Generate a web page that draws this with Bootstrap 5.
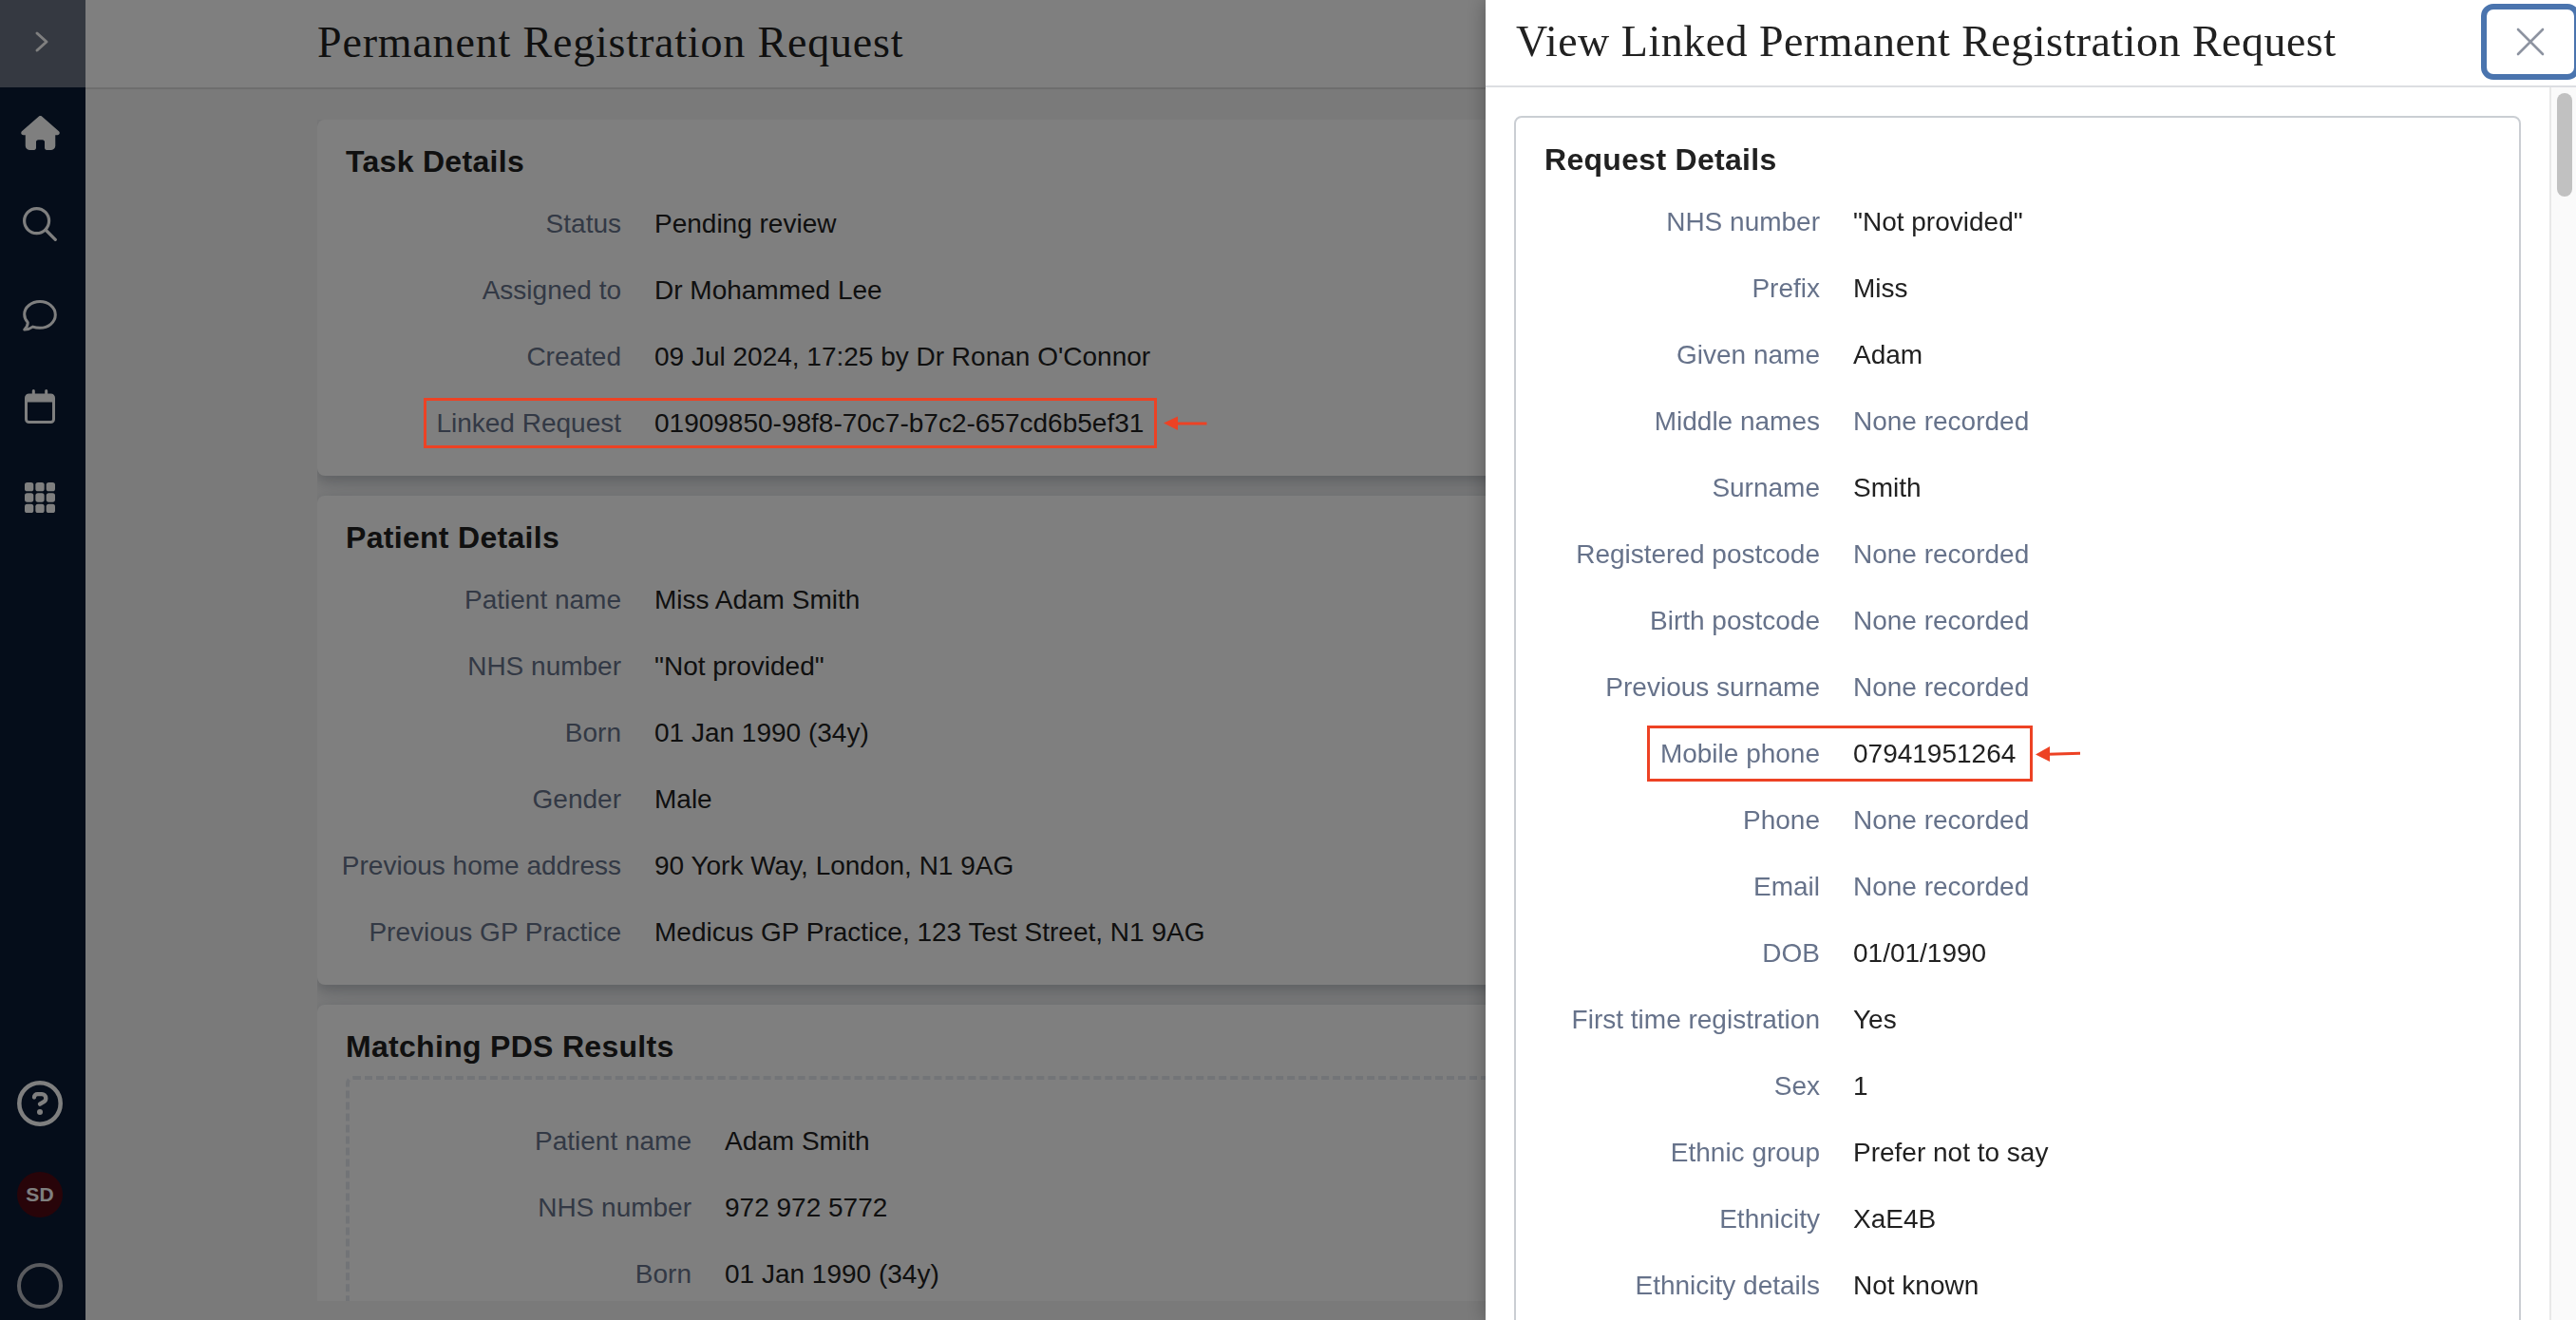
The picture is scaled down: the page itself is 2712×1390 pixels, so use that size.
<!DOCTYPE html>
<html lang="en">
<head>
<meta charset="utf-8">
<meta name="viewport" content="width=device-width, initial-scale=1">
<title>Permanent Registration Request</title>
<link href="https://cdn.jsdelivr.net/npm/bootstrap@5.3.0/dist/css/bootstrap.min.css" rel="stylesheet">
<style>
html,body{height:100%}
body{font-family:"Liberation Sans",Arial,sans-serif;font-size:28px;line-height:32px;color:#212121;background:#f5f5f5;overflow:hidden}
.side-rail{width:90px;background:#0b1b35}
.rail-toggle{height:92px;background:#6a7282;padding-right:3px}
.rail-item{height:96px;padding-right:6px}
.rail-item svg,.rail-toggle svg{display:block}
.rail-bottom{margin-bottom:-12px}
.avatar{width:48px;height:48px;background:#500812;color:#fff;font-weight:700;font-size:21px;letter-spacing:.2px}
.ring{width:48px;height:48px;border:4px solid #b4b7bf}
.page-head{height:94px;padding:0 0 3px 244px;border-bottom:2px solid #dcdcdc;background:#fff}
.page-title{font-family:"Liberation Serif",Georgia,serif;font-size:46px;line-height:52px;letter-spacing:.82px;font-weight:400;color:#212121;white-space:nowrap}
.drawer .page-title{letter-spacing:.49px;padding-bottom:2px}
.content-scroll{margin:32px 244px 20px 244px;overflow:hidden;min-height:0}
.panel{background:#fff;border-radius:8px;padding:28px 0 20px 30px;box-shadow:0 6px 12px rgba(40,50,65,.2),0 2px 30px rgba(90,110,140,.14);margin-bottom:21px;flex:none}
.panel-title{font-size:32px;line-height:32px;letter-spacing:.3px;font-weight:700;margin:0 0 15px}
.field{height:70px;display:flex;align-items:center;position:relative}
.field-label{width:290px;flex:none;display:flex;justify-content:flex-end;color:#66728a;margin-right:35px;white-space:nowrap}
.no-value{color:#66728a}
.matches{border:4px dashed #e4e8ee;border-radius:8px;margin:0 30px 0 0;padding:30px 0 20px 70px}
.drawer{--bs-offcanvas-width:1148px;border:0!important;box-shadow:0 0 20px rgba(0,0,0,.3);color:#212121;background:#fff}
.drawer-head{height:92px;border-bottom:2px solid #dcdee2;padding-left:32px}
.close-btn{width:104px;height:80px;border:6px solid #4a74ae;border-radius:13px;background:#fff;margin:0 -4px 2px 0;padding:0}
.drawer-scroll{overflow:hidden;padding:30px 30px 0 30px}
.request-card{border:2px solid #caced3;border-radius:8px;padding:28px 0 60px 30px}
.track{width:28px;flex:none;background:#fafafa;border-left:2px solid #e8e8e8;padding:6px 4px 0 6px}
.thumb{height:109px;width:16px;border-radius:8px;background:#c1c1c1}
.callout-box{position:absolute;border:3px solid #ed4224;z-index:1041}
.callout-arrow{position:absolute;z-index:1041}
.on-linked{left:82px;top:8px;width:772px;height:53px}
.arrow-linked{left:861px;top:26px}
.on-mobile{left:108px;top:5px;width:406px;height:59px}
.arrow-mobile{left:517px;top:26px}
</style>
</head>
<body>
<div class="d-flex vh-100">
  <nav class="side-rail d-flex flex-column flex-shrink-0">
    <div class="rail-toggle d-flex align-items-center justify-content-center flex-shrink-0"><svg class="mb-1" width="16" height="26" viewBox="0 0 16 26" fill="none" stroke="#fff" stroke-width="3" stroke-linecap="round" stroke-linejoin="round"><path d="M3 4 13 13 3 22"/></svg></div>
    <div class="rail-item d-flex align-items-center justify-content-center"><svg width="41" height="36" viewBox="0 0 576 512" fill="#fff"><path d="M575.800 255.500c0 18-15 32.100-32 32.100h-32l.7 160.200c.2 35.500-28.500 64.300-64 64.300H384c-17.700 0-32-14.300-32-32v-88c0-17.700-14.300-32-32-32h-64c-17.700 0-32 14.300-32 32v88c0 17.700-14.300 32-32 32h-64c-35.300 0-64-28.700-64-64V287.600H32c-18 0-32-14-32-32.100 0-9 3-17 10-24L266.400 8c7-7 15-8 22-8s15 2 21 7l255.400 224.500c8 7 12 15 11 24z"/></svg></div>
    <div class="rail-item d-flex align-items-center justify-content-center"><svg width="36" height="36" viewBox="0 0 36 36" fill="none" stroke="#fff" stroke-width="3.200" stroke-linecap="round"><circle cx="14.600" cy="14.600" r="13"/><path d="M24 24 34.300 34.300"/></svg></div>
    <div class="rail-item d-flex align-items-center justify-content-center"><svg width="36" height="33" viewBox="0 0 36 33" fill="none" stroke="#fff" stroke-width="3" stroke-linejoin="round"><path d="M18 1.600C9 1.600 1.700 7.500 1.700 15c0 3.300 1.300 6.100 3.500 8.500.2 2.600-1.200 5.400-3.400 7.600 3.200.1 6.300-1.300 8.700-3 2.300.8 4.800 1.200 7.500 1.200 9 0 16.300-6 16.300-13.700S27 1.600 18 1.600z"/></svg></div>
    <div class="rail-item d-flex align-items-center justify-content-center"><svg width="32" height="36" viewBox="0 0 32 36" fill="none" stroke="#fff" stroke-width="3"><path d="M9.300 1.600V6M22.700 1.600V6" stroke-linecap="round"/><rect x="1.500" y="6" width="29" height="28.500" rx="3"/><path d="M2 5h28v8.500H2z" fill="#fff" stroke="none"/></svg></div>
    <div class="rail-item d-flex align-items-center justify-content-center"><svg width="32" height="32" viewBox="0 0 32 32" fill="#fff"><rect width="9.300" height="9.300" rx="2.600"/><rect x="11.350" width="9.300" height="9.300" rx="2.600"/><rect x="22.700" width="9.300" height="9.300" rx="2.600"/><rect y="11.350" width="9.300" height="9.300" rx="2.600"/><rect x="11.350" y="11.350" width="9.300" height="9.300" rx="2.600"/><rect x="22.700" y="11.350" width="9.300" height="9.300" rx="2.600"/><rect y="22.700" width="9.300" height="9.300" rx="2.600"/><rect x="11.350" y="22.700" width="9.300" height="9.300" rx="2.600"/><rect x="22.700" y="22.700" width="9.300" height="9.300" rx="2.600"/></svg></div>
    <div class="rail-bottom mt-auto">
      <div class="rail-item d-flex align-items-center justify-content-center"><svg width="48" height="48" viewBox="0 0 48 48" fill="none" stroke="#fff"><circle cx="24" cy="24" r="21.700" stroke-width="4.500"/><path d="M18 17.500c0-2 1.500-3.300 3.500-3.300h4.500c2.300 0 4.300 1.800 4.300 4.200 0 1.500-.8 2.900-2.100 3.700L24 24.700" stroke-width="4.300" stroke-linecap="round" stroke-linejoin="round"/><circle cx="24" cy="33" r="3" fill="#fff" stroke="none"/></svg></div>
      <div class="rail-item d-flex align-items-center justify-content-center"><span class="avatar rounded-circle d-flex align-items-center justify-content-center">SD</span></div>
      <div class="rail-item d-flex align-items-center justify-content-center"><span class="ring rounded-circle"></span></div>
    </div>
  </nav>
  <main class="flex-grow-1 d-flex flex-column overflow-hidden">
    <header class="page-head flex-shrink-0 d-flex align-items-center"><h1 class="page-title m-0">Permanent Registration Request</h1></header>
    <div class="content-scroll d-flex flex-column flex-grow-1">
      <section class="panel">
        <h2 class="panel-title">Task Details</h2>
        <div class="field"><span class="field-label">Status</span><span>Pending review</span></div>
        <div class="field"><span class="field-label">Assigned to</span><span>Dr Mohammed Lee</span></div>
        <div class="field"><span class="field-label">Created</span><span>09 Jul 2024, 17:25 by Dr Ronan O'Connor</span></div>
        <div class="field"><span class="field-label">Linked Request</span><span>01909850-98f8-70c7-b7c2-657cd6b5ef31</span>
          <span class="callout-box on-linked"></span>
          <svg class="callout-arrow arrow-linked" width="48" height="18" viewBox="0 0 48 18"><path d="M0 8.500 15 1.500V16z" fill="#ed4224"/><path d="M13 9H45.500" stroke="#ed4224" stroke-width="3"/></svg>
        </div>
      </section>
      <section class="panel">
        <h2 class="panel-title">Patient Details</h2>
        <div class="field"><span class="field-label">Patient name</span><span>Miss Adam Smith</span></div>
        <div class="field"><span class="field-label">NHS number</span><span>"Not provided"</span></div>
        <div class="field"><span class="field-label">Born</span><span>01 Jan 1990 (34y)</span></div>
        <div class="field"><span class="field-label">Gender</span><span>Male</span></div>
        <div class="field"><span class="field-label">Previous home address</span><span>90 York Way, London, N1 9AG</span></div>
        <div class="field"><span class="field-label">Previous GP Practice</span><span>Medicus GP Practice, 123 Test Street, N1 9AG</span></div>
      </section>
      <section class="panel">
        <h2 class="panel-title">Matching PDS Results</h2>
        <div class="matches">
          <div class="field"><span class="field-label">Patient name</span><span>Adam Smith</span></div>
          <div class="field"><span class="field-label">NHS number</span><span>972 972 5772</span></div>
          <div class="field"><span class="field-label">Born</span><span>01 Jan 1990 (34y)</span></div>
          <div class="field"></div>
        </div>
      </section>
    </div>
  </main>
</div>
<div class="offcanvas-backdrop show"></div>
<aside class="offcanvas offcanvas-end show drawer" data-bs-backdrop="false" data-bs-scroll="true" tabindex="-1" aria-labelledby="drawerTitle">
  <div class="drawer-head d-flex align-items-center justify-content-between flex-shrink-0">
    <h2 class="page-title m-0" id="drawerTitle">View Linked Permanent Registration Request</h2>
    <button type="button" class="close-btn d-flex align-items-center justify-content-center" aria-label="Close"><svg width="30" height="30" viewBox="0 0 30 30" stroke="#8d93a0" stroke-width="2.600" stroke-linecap="round"><path d="M2 2 28 28M28 2 2 28"/></svg></button>
  </div>
  <div class="d-flex flex-grow-1 overflow-hidden">
    <div class="drawer-scroll flex-grow-1">
      <section class="request-card">
        <h3 class="panel-title">Request Details</h3>
        <div class="field"><span class="field-label">NHS number</span><span>"Not provided"</span></div>
        <div class="field"><span class="field-label">Prefix</span><span>Miss</span></div>
        <div class="field"><span class="field-label">Given name</span><span>Adam</span></div>
        <div class="field"><span class="field-label">Middle names</span><span class="no-value">None recorded</span></div>
        <div class="field"><span class="field-label">Surname</span><span>Smith</span></div>
        <div class="field"><span class="field-label">Registered postcode</span><span class="no-value">None recorded</span></div>
        <div class="field"><span class="field-label">Birth postcode</span><span class="no-value">None recorded</span></div>
        <div class="field"><span class="field-label">Previous surname</span><span class="no-value">None recorded</span></div>
        <div class="field"><span class="field-label">Mobile phone</span><span>07941951264</span>
          <span class="callout-box on-mobile"></span>
          <svg class="callout-arrow arrow-mobile" width="50" height="18" viewBox="0 0 50 18"><path d="M0 9.500 15 1V17z" fill="#ed4224"/><path d="M13 9.200 47 8.200" stroke="#ed4224" stroke-width="3"/></svg>
        </div>
        <div class="field"><span class="field-label">Phone</span><span class="no-value">None recorded</span></div>
        <div class="field"><span class="field-label">Email</span><span class="no-value">None recorded</span></div>
        <div class="field"><span class="field-label">DOB</span><span>01/01/1990</span></div>
        <div class="field"><span class="field-label">First time registration</span><span>Yes</span></div>
        <div class="field"><span class="field-label">Sex</span><span>1</span></div>
        <div class="field"><span class="field-label">Ethnic group</span><span>Prefer not to say</span></div>
        <div class="field"><span class="field-label">Ethnicity</span><span>XaE4B</span></div>
        <div class="field"><span class="field-label">Ethnicity details</span><span>Not known</span></div>
      </section>
    </div>
    <div class="track"><div class="thumb"></div></div>
  </div>
</aside>
<script src="https://cdn.jsdelivr.net/npm/bootstrap@5.3.0/dist/js/bootstrap.bundle.min.js"></script>
</body>
</html>
